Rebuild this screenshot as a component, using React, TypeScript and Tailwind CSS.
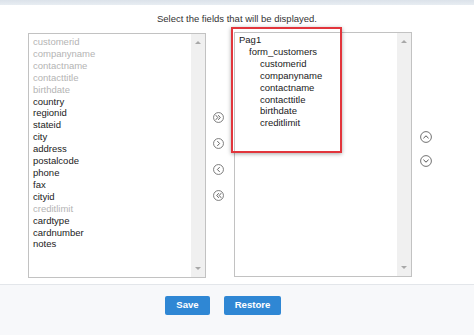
import type { ReactNode } from "react";

const available: { name: string; used?: boolean }[] = [
  { name: "customerid", used: true },
  { name: "companyname", used: true },
  { name: "contactname", used: true },
  { name: "contacttitle", used: true },
  { name: "birthdate", used: true },
  { name: "country" },
  { name: "regionid" },
  { name: "stateid" },
  { name: "city" },
  { name: "address" },
  { name: "postalcode" },
  { name: "phone" },
  { name: "fax" },
  { name: "cityid" },
  { name: "creditlimit", used: true },
  { name: "cardtype" },
  { name: "cardnumber" },
  { name: "notes" },
];

const selected = ["customerid", "companyname", "contactname", "contacttitle", "birthdate", "creditlimit"];

function CircleIcon({ d, size = 11 }: { d: string; size?: number }) {
  return (
    <svg width={size} height={size} viewBox="0 0 12 12" className="block">
      <circle cx="6" cy="6" r="5.4" fill="none" stroke="#6a6a6a" strokeWidth="0.95" />
      <path d={d} fill="none" stroke="#555" strokeWidth="1" strokeLinecap="round" strokeLinejoin="round" />
    </svg>
  );
}

function ListBox({ children, className }: { children: ReactNode; className?: string }) {
  return (
    <div className={`flex h-[245px] w-[178px] border border-[#c2c2c2] bg-white ${className ?? ""}`}>
      <div className="flex-1 overflow-hidden">{children}</div>
      <div className="flex w-[14px] flex-col items-center justify-between bg-[#f0f0f0] py-[6px]">
        <svg width="6" height="4" viewBox="0 0 6 4">
          <path d="M0 4 L3 1 L6 4 Z" fill="#a8a8a8" />
        </svg>
        <svg width="6" height="4" viewBox="0 0 6 4">
          <path d="M0 0 L3 3 L6 0 Z" fill="#a8a8a8" />
        </svg>
      </div>
    </div>
  );
}

export default function App() {
  return (
    <div
      className="relative flex h-[335px] w-[474px] flex-col overflow-hidden bg-white text-[9.5px] text-[#1a1a1a]"
      style={{ fontFamily: '"Liberation Sans", Arial, sans-serif' }}
    >
      <div className="h-[5px] bg-gradient-to-b from-[#dbe2ea] to-[#e8edf2]" />
      <p className="pt-[8px] text-center leading-[12px] text-[#333]">Select the fields that will be displayed.</p>

      <div className="flex items-start pl-[28px] pt-[7px]">
        <ListBox className="mt-[1px]">
          <ul className="pl-[4px] pt-[2px] leading-[11.9px]">
            {available.map((f) => (
              <li key={f.name} className={f.used ? "text-[#b4b4b4]" : "text-[#1a1a1a]"}>
                {f.name}
              </li>
            ))}
          </ul>
        </ListBox>

        <div className="flex w-[28px] flex-col gap-[15px] pl-[7px] pt-[80px]">
          <CircleIcon d="M3.3 3.8 L5.2 6 L3.3 8.2 M6 3.8 L7.9 6 L6 8.2" />
          <CircleIcon d="M5 3.7 L7.2 6 L5 8.3" />
          <CircleIcon d="M7 3.7 L4.8 6 L7 8.3" />
          <CircleIcon d="M8.7 3.8 L6.8 6 L8.7 8.2 M6 3.8 L4.1 6 L6 8.2" />
        </div>

        <ListBox>
          <ul className="pl-[4px] pt-[1px] leading-[11.9px]">
            <li>Pag1</li>
            <li className="pl-[10px]">form_customers</li>
            {selected.map((f) => (
              <li key={f} className="pl-[21px]">
                {f}
              </li>
            ))}
          </ul>
        </ListBox>

        <div className="flex flex-col gap-[12px] pl-[8px] pt-[99px]">
          <CircleIcon size={12} d="M3.7 7 L6 4.8 L8.3 7" />
          <CircleIcon size={12} d="M3.7 5 L6 7.2 L8.3 5" />
        </div>
      </div>

      <div className="mt-auto flex h-[51px] gap-[14px] border-t border-[#e3e6ea] bg-[#f7f8fa] pl-[165px] pt-[11px]">
        <button
          type="button"
          className="h-[19px] w-[45px] rounded-[2px] bg-[#2f87d4] text-[9.6px] font-bold text-white"
        >
          Save
        </button>
        <button
          type="button"
          className="h-[19px] w-[57px] rounded-[2px] bg-[#2f87d4] text-[9.6px] font-bold text-white"
        >
          Restore
        </button>
      </div>

      <div className="pointer-events-none absolute left-[231px] top-[27px] h-[126px] w-[111px] border-2 border-[#e2353c] shadow-[0_1px_4px_rgba(0,0,0,0.35)]" />
    </div>
  );
}
